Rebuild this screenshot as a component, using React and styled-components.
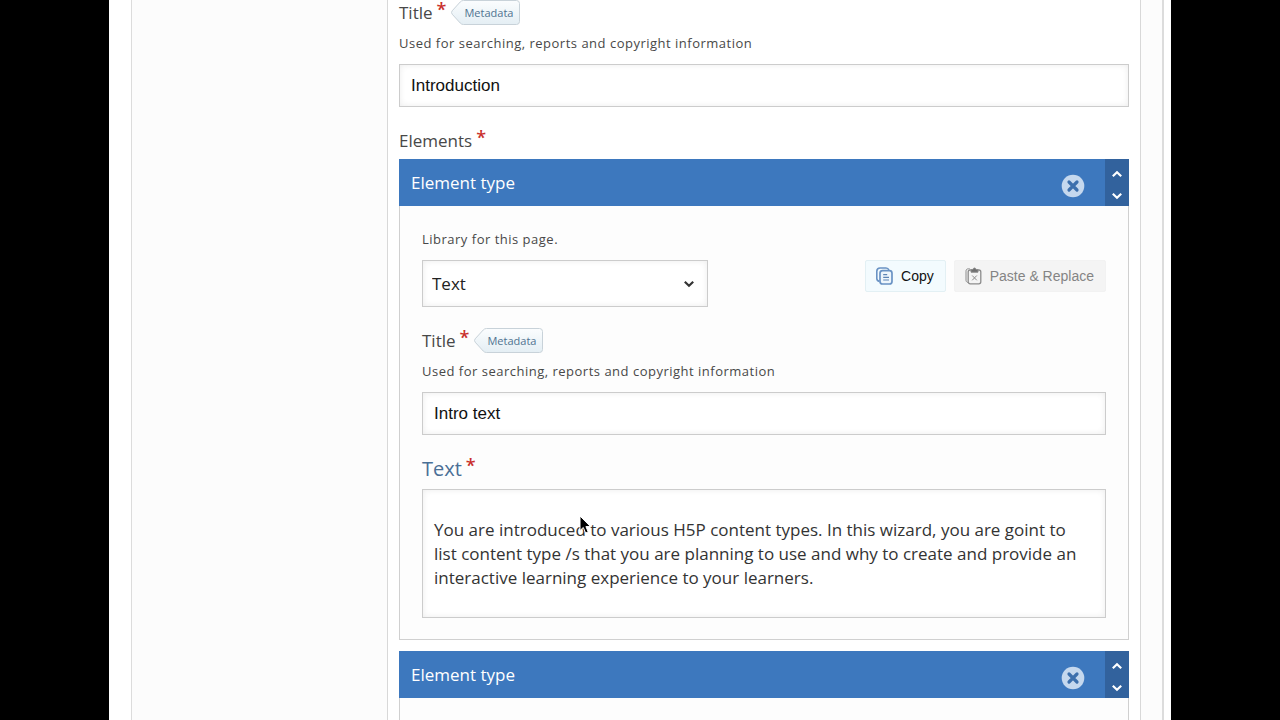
import React, { useState } from 'react'
import styled, { createGlobalStyle, css } from 'styled-components'

const GlobalStyle = createGlobalStyle`
  *,
  *::before,
  *::after {
    box-sizing: border-box;
  }

  body {
    margin: 0;
    background: #000;
    color: #484848;
    font-family: 'Open Sans', 'Noto Sans', sans-serif;
    font-size: 17px;
    line-height: 24px;
  }
`

const Page = styled.main`
  display: flex;
  min-height: 100vh;
  margin: 0 109px;
  padding: 0 7px 0 22px;
  background: #fff;
`

const Editor = styled.div`
  display: flex;
  flex: 1;
  border: solid #dcdcdc;
  border-width: 0 2px 0 1px;
  background: #fcfcfc;
`

const Sidebar = styled.aside`
  flex: 0 0 255px;
`

const Form = styled.form`
  display: flex;
  flex: 1;
  flex-direction: column;
  min-width: 0;
  margin-right: 21px;
  padding: 0 11px;
  border: solid #d8d8d8;
  border-width: 0 1px;
  background: #fff;
`

const Field = styled.div`
  display: flex;
  flex-direction: column;
`

const LabelRow = styled.div`
  display: flex;
  align-items: center;
  height: 25px;
  margin-top: ${props => (props.$spaced ? '21px' : '0')};
`

const Label = styled.label`
  color: ${props => (props.$important ? '#4a6f96' : '#484848')};
  font-size: ${props => (props.$important ? '20px' : '17px')};
`

const GroupTitle = styled.h2`
  margin: 22px 0 6px;
  font-size: 17px;
  font-weight: 400;
`

const Required = styled.span`
  margin-left: 4px;
  color: #c9302c;
  font-size: 18px;
  font-weight: 600;
  line-height: 16px;
  vertical-align: top;
`

const smallText = css`
  font-size: 13px;
  line-height: 20px;
  letter-spacing: 0.5px;
`

const Description = styled.p`
  ${smallText}
  margin: 8px 0 11px;
`

const LibraryLabel = styled.label`
  ${smallText}
  display: block;
  margin-bottom: 11px;
`

const MetadataButton = styled.button`
  position: relative;
  width: 69px;
  height: 25px;
  margin-left: 5px;
  padding: 0 6px 0 12px;
  border: 0;
  background: none;
  color: #4f7391;
  font-family: inherit;
  font-size: 11px;
  cursor: pointer;

  svg {
    position: absolute;
    inset: 0;
  }

  span {
    position: relative;
  }
`

const control = css`
  border: 1px solid #ccc;
  border-radius: 0;
  outline: none;
  background: #fff;
  box-shadow: inset 0 0 6px #ebebeb;
`

const TextInput = styled.input`
  ${control}
  width: 100%;
  height: 43px;
  padding: 0 11px;
  color: #111;
  font-family: 'Liberation Sans', Arial, sans-serif;
  font-size: 17px;
`

const Element = styled.section`
  display: flex;
  flex: ${props => (props.$last ? '1' : 'none')};
  flex-direction: column;
  margin-bottom: ${props => (props.$last ? '0' : '11px')};
`

const ElementHeader = styled.header`
  display: flex;
  height: 47px;
  background: #3d78be;
  color: #fff;

  h3 {
    flex: 1;
    margin: 0;
    padding: 12px;
    font-size: 17px;
    font-weight: 400;
  }
`

const IconButton = styled.button`
  display: grid;
  place-items: center;
  padding: 0;
  border: 0;
  background: none;
  cursor: pointer;
`

const RemoveButton = styled(IconButton)`
  width: 24px;
  margin-right: 20px;
  padding-top: 7px;
`

const OrderGroup = styled.div`
  display: grid;
  grid-template-rows: 1fr 1fr;
  gap: 2px;
  width: 24px;
  padding-top: 5px;
  background: #32629d;
`

const ElementBody = styled.div`
  flex: 1;
  padding: 23px 22px 21px;
  border: 1px solid #d0d0d0;
  border-top: 0;
  border-bottom-width: ${props => (props.$open ? '0' : '1px')};
  background: #fdfdfd;
`

const LibraryRow = styled.div`
  display: flex;
  align-items: flex-start;
  gap: 8px;
`

const SelectBox = styled.div`
  display: flex;
  flex: 0 0 286px;
  align-items: center;
  margin-right: auto;

  select {
    ${control}
    appearance: none;
    width: 100%;
    height: 47px;
    padding: 0 9px;
    color: #222;
    font-family: inherit;
    font-size: 17px;
  }

  svg {
    flex: none;
    margin-left: -25px;
    pointer-events: none;
  }
`

const ActionButton = styled.button`
  display: flex;
  align-items: center;
  gap: 8px;
  height: 32px;
  padding: 0 11px 0 10px;
  border: 1px solid #e3f0f4;
  border-radius: 2px;
  background: #f3fbfe;
  color: #111;
  font-family: 'Liberation Sans', Arial, sans-serif;
  font-size: 14px;
  cursor: pointer;

  &:disabled {
    border-color: #f2f2f2;
    background: #f4f4f4;
    color: #848484;
    cursor: default;
  }
`

const RichText = styled.div`
  position: relative;
  display: flex;
  margin-top: 8px;

  textarea {
    ${control}
    width: 100%;
    height: 129px;
    padding: 28px 20px 28px 11px;
    overflow: hidden;
    resize: none;
    color: #333;
    font-family: inherit;
    font-size: 17px;
    line-height: 24px;
  }
`

const Pointer = styled.svg`
  position: absolute;
  top: 26px;
  left: 157px;
  pointer-events: none;
`

const Chevron = ({ up, color = '#fff' }) => (
  <svg width="12" height="8" viewBox="0 0 12 8" fill="none" aria-hidden="true">
    <path
      d={up ? 'M1.8 6.2 6 2.2l4.2 4' : 'M1.8 1.8 6 5.8l4.2-4'}
      stroke={color}
      strokeWidth="2.2"
    />
  </svg>
)

const RemoveIcon = () => (
  <svg width="24" height="24" viewBox="0 0 24 24" aria-hidden="true">
    <circle cx="12" cy="12" r="11.3" fill="#c5d8ee" />
    <path
      d="m8 8 8 8m0-8-8 8"
      stroke="#3d70ad"
      strokeWidth="3.2"
      strokeLinecap="round"
    />
  </svg>
)

const CopyIcon = () => (
  <svg width="17" height="18" viewBox="0 0 17 18" fill="none" stroke="#6a93c4" aria-hidden="true">
    <path
      d="M3.4 14.4C1.6 14 .8 13 .8 11.5V4.3C.8 2 2 1 4 1h6c1.5 0 2.4.7 2.9 2"
      strokeWidth="1.6"
    />
    <rect x="4" y="3.6" width="12" height="13.4" rx="2.6" fill="#eef6fc" strokeWidth="1.7" />
    <path d="M7.2 7.6h4M7.2 10.3h5.8M7.2 13h5.8" stroke="#5c84b4" strokeWidth="1.2" />
  </svg>
)

const PasteIcon = () => (
  <svg width="17" height="18" viewBox="0 0 17 18" fill="none" stroke="#8c8c8c" aria-hidden="true">
    <path d="M2.8 15.5C1.4 15 1 14.2 1 13V4.2C1 2.6 1.8 1.8 3.4 1.8h1.4" />
    <rect x="3.2" y="3" width="12.6" height="13.8" rx="2" strokeWidth="1.3" />
    <path d="M6 2.5h2c.2-2 2.8-2 3 0h2v2.7H6z" fill="#6f6f6f" />
    <path d="m7.2 8.5 4.6 4.8m0-4.8-4.6 4.8" />
  </svg>
)

const Metadata = ({ id }) => (
  <MetadataButton type="button">
    <svg width="69" height="25" viewBox="0 0 69 25" aria-hidden="true">
      <defs>
        <linearGradient id={id} x1="0" y1="0" x2="0" y2="1">
          <stop offset="0" stopColor="#fbfdfe" />
          <stop offset="1" stopColor="#e4eef4" />
        </linearGradient>
      </defs>
      <path
        d="M12.5.5h53q3 0 3 3v18q0 3-3 3h-53q-2 0-3.3-1.5l-8-8.8q-1.4-1.7 0-3.4l8-8.8q1.3-1.5 3.3-1.5z"
        fill={`url(#${id})`}
        stroke="#c8d2d9"
      />
    </svg>
    <span>Metadata</span>
  </MetadataButton>
)

const TitleField = ({ id, value, spaced }) => {
  const [title, setTitle] = useState(value)

  return (
    <Field>
      <LabelRow $spaced={spaced}>
        <Label htmlFor={id}>
          Title
          <Required>*</Required>
        </Label>
        <Metadata id={`${id}-metadata`} />
      </LabelRow>
      <Description>Used for searching, reports and copyright information</Description>
      <TextInput
        id={id}
        type="text"
        value={title}
        onChange={e => setTitle(e.target.value)}
        required
      />
    </Field>
  )
}

const ElementBar = () => (
  <ElementHeader>
    <h3>Element type</h3>
    <RemoveButton type="button" aria-label="Remove element">
      <RemoveIcon />
    </RemoveButton>
    <OrderGroup>
      <IconButton type="button" aria-label="Move up">
        <Chevron up />
      </IconButton>
      <IconButton type="button" aria-label="Move down">
        <Chevron />
      </IconButton>
    </OrderGroup>
  </ElementHeader>
)

const App = () => {
  const [text, setText] = useState(
    'You are introduced to various H5P content types. In this wizard, you are goint to list content type /s that you are planning to use and why to create and provide an interactive learning experience to your learners.'
  )

  return (
    <>
      <GlobalStyle />
      <Page>
        <Editor>
          <Sidebar />
          <Form onSubmit={e => e.preventDefault()}>
            <TitleField id="page-title" value="Introduction" />

            <GroupTitle>
              Elements
              <Required>*</Required>
            </GroupTitle>

            <Element>
              <ElementBar />
              <ElementBody>
                <LibraryLabel htmlFor="library">Library for this page.</LibraryLabel>
                <LibraryRow>
                  <SelectBox>
                    <select id="library" defaultValue="text">
                      <option value="text">Text</option>
                    </select>
                    <Chevron color="#333" />
                  </SelectBox>
                  <ActionButton type="button">
                    <CopyIcon />
                    Copy
                  </ActionButton>
                  <ActionButton type="button" disabled>
                    <PasteIcon />
                    Paste &amp; Replace
                  </ActionButton>
                </LibraryRow>

                <TitleField id="element-title" value="Intro text" spaced />

                <LabelRow $spaced>
                  <Label htmlFor="element-text" $important>
                    Text
                    <Required>*</Required>
                  </Label>
                </LabelRow>
                <RichText>
                  <textarea
                    id="element-text"
                    value={text}
                    onChange={e => setText(e.target.value)}
                    spellCheck={false}
                  />
                  <Pointer width="14" height="20" viewBox="0 0 14 20" aria-hidden="true">
                    <path
                      d="M1 1v14.5l3.3-3 2.3 5.5 2.6-1.1-2.3-5.3h4.6z"
                      fill="#000"
                      stroke="#fff"
                    />
                  </Pointer>
                </RichText>
              </ElementBody>
            </Element>

            <Element $last>
              <ElementBar />
              <ElementBody $open />
            </Element>
          </Form>
        </Editor>
      </Page>
    </>
  )
}

export default App
